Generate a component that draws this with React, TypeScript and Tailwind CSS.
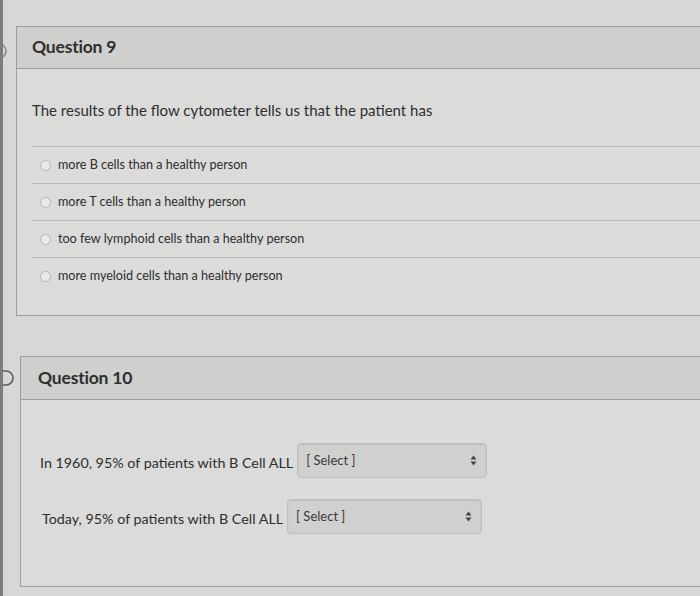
const ANSWERS = [
  "more B cells than a healthy person",
  "more T cells than a healthy person",
  "too few lymphoid cells than a healthy person",
  "more myeloid cells than a healthy person",
];

function FlagIcon({ className }: { className?: string }) {
  return (
    <svg className={className} width="16" height="18" viewBox="0 0 16 18" fill="none">
      <path
        d="M-2 2 H7 A7 7 0 0 1 7 16 H-2"
        stroke="#5a5a5a"
        strokeWidth="1.6"
      />
    </svg>
  );
}

function SelectBox({ width }: { width: string }) {
  return (
    <div
      className={`${width} flex h-[35px] items-center justify-between rounded-[4px] border border-[#bdbdbb] bg-[#d0d0ce] pl-[8px] pr-[9px] shadow-[inset_0_1px_2px_rgba(0,0,0,0.08)]`}
    >
      <span className="text-[13px] text-[#3a3a3a]">[ Select ]</span>
      <svg width="7" height="11" viewBox="0 0 7 11">
        <path d="M3.5 0.5 L6.5 4.5 H0.5 Z" fill="#444" />
        <path d="M3.5 10.5 L6.5 6.5 H0.5 Z" fill="#444" />
      </svg>
    </div>
  );
}

export default function App() {
  return (
    <div className="flex h-[596px] w-[700px] overflow-hidden border-l-[3px] border-[#7c7c7a] bg-[#d7d7d5] font-['Lato','Liberation_Sans',sans-serif] text-[#2e2e2e]">
      <div className="flex flex-1 flex-col pt-[26px]">
        {/* Question 9 */}
        <div className="flex">
          <div className="relative w-[13px] shrink-0">
            <FlagIcon className="absolute -left-[11px] top-[16px] opacity-60" />
          </div>
          <div className="flex-1 border-y border-l border-[#9d9d9b]">
            <div className="flex h-[42px] items-center border-b border-[#9d9d9b] bg-[#cfcfcd] pl-[15px] text-[17.5px] font-bold tracking-[-0.2px]">
              Question 9
            </div>
            <div className="bg-[#dbdbd9] pb-[21px] pl-[15px] pt-[30px]">
              <p className="text-[15px] leading-[22px]">
                The results of the flow cytometer tells us that the patient has
              </p>
              <div className="mt-[25px]">
                {ANSWERS.map((a) => (
                  <div
                    key={a}
                    className="flex h-[37px] items-center border-t border-[#b9b9b7] pl-[8px]"
                  >
                    <span className="mr-[7px] h-[11px] w-[11px] rounded-full border border-[#b3b3b1] bg-[#e9e9e7]" />
                    <span className="text-[12.6px]">{a}</span>
                  </div>
                ))}
              </div>
            </div>
          </div>
        </div>

        {/* Question 10 */}
        <div className="mt-[40px] flex">
          <div className="relative w-[17px] shrink-0">
            <FlagIcon className="absolute -left-[4px] top-[13px]" />
          </div>
          <div className="flex-1 border-y border-l border-[#9d9d9b]">
            <div className="flex h-[43px] items-center border-b border-[#9d9d9b] bg-[#cfcfcd] pl-[17px] text-[17.5px] font-bold tracking-[-0.2px]">
              Question 10
            </div>
            <div className="flex flex-col gap-[21px] bg-[#dbdbd9] pb-[52px] pl-[19px] pt-[43px]">
              <div className="flex items-center gap-[4px]">
                <span className="mt-[5px] text-[14.3px]">
                  In 1960, 95% of patients with B Cell ALL
                </span>
                <SelectBox width="w-[190px]" />
              </div>
              <div className="flex items-center gap-[4px]">
                <span className="mt-[5px] pl-[2px] text-[14.3px]">
                  Today, 95% of patients with B Cell ALL
                </span>
                <SelectBox width="w-[195px]" />
              </div>
            </div>
          </div>
        </div>
      </div>
    </div>
  );
}
